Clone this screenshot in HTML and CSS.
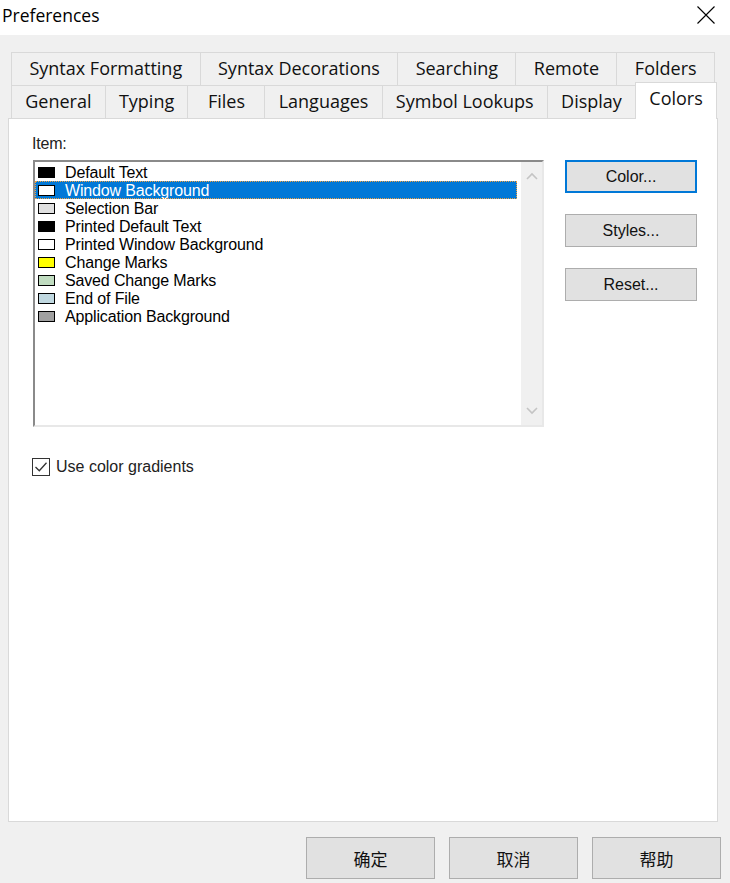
FILE: index.html
```html
<!DOCTYPE html>
<html lang="en">
<head>
    <meta charset="UTF-8">
    <title>Preferences</title>
    <link rel="stylesheet" href="styles.css">
</head>
<body>

<div class="titlebar">
    <span class="title">Preferences</span>
    <svg class="close" width="18" height="18" viewBox="0 0 18 18">
        <path d="M0.5 0.5 L17.5 17.5 M17.5 0.5 L0.5 17.5" stroke="#000" stroke-width="1.1" fill="none"/>
    </svg>
</div>

<div class="dialog">
    <div class="tabs">
        <div class="tab-row">
            <div class="tab">Syntax Formatting</div>
            <div class="tab">Syntax Decorations</div>
            <div class="tab">Searching</div>
            <div class="tab">Remote</div>
            <div class="tab">Folders</div>
        </div>
        <div class="tab-row">
            <div class="tab">General</div>
            <div class="tab">Typing</div>
            <div class="tab">Files</div>
            <div class="tab">Languages</div>
            <div class="tab">Symbol Lookups</div>
            <div class="tab">Display</div>
            <div class="tab active">Colors</div>
        </div>
    </div>

    <div class="panel">
        <div class="field-label">Item:</div>

        <div class="item-area">
            <div class="listbox">
                <ul class="items">
                    <li><span class="swatch black"></span>Default Text</li>
                    <li class="selected"><span class="swatch white"></span>Window Background</li>
                    <li><span class="swatch silver"></span>Selection Bar</li>
                    <li><span class="swatch black"></span>Printed Default Text</li>
                    <li><span class="swatch white"></span>Printed Window Background</li>
                    <li><span class="swatch yellow"></span>Change Marks</li>
                    <li><span class="swatch green"></span>Saved Change Marks</li>
                    <li><span class="swatch blue"></span>End of File</li>
                    <li><span class="swatch gray"></span>Application Background</li>
                </ul>
                <div class="scrollbar">
                    <svg width="12" height="8" viewBox="0 0 12 8"><path d="M1 7 L6 2 L11 7" stroke="#c4c4c4" stroke-width="1.6" fill="none"/></svg>
                    <svg width="12" height="8" viewBox="0 0 12 8"><path d="M1 1 L6 6 L11 1" stroke="#c4c4c4" stroke-width="1.6" fill="none"/></svg>
                </div>
            </div>

            <div class="side-buttons">
                <button class="btn default">Color...</button>
                <button class="btn">Styles...</button>
                <button class="btn">Reset...</button>
            </div>
        </div>

        <label class="check">
            <span class="checkbox">
                <svg width="16" height="16" viewBox="0 0 16 16"><path d="M2.5 8 L6.3 11.8 L13.5 3.8" stroke="#333" stroke-width="1.3" fill="none"/></svg>
            </span>
            Use color gradients
        </label>
    </div>

    <div class="footer">
        <button class="btn big">确定</button>
        <button class="btn big">取消</button>
        <button class="btn big">帮助</button>
    </div>
</div>

</body>
</html>
```

FILE: styles.css
```css
body {
    margin: 0;
    width: 730px;
    height: 883px;
    overflow: hidden;
    background-color: #f0f0f0;
    font-family: "Liberation Sans", Arial, sans-serif;
    font-size: 16px;
    color: #000;
}

.titlebar {
    height: 35px;
    background-color: #fff;
    display: flex;
    align-items: center;
    justify-content: space-between;
    padding: 0 15px 0 2px;
}

.title {
    font-family: "Open Sans", "Noto Sans", sans-serif;
    font-size: 17.5px;
    margin-top: -5px;
}

.close {
    margin-top: -6px;
}

.dialog {
    padding: 17px 12px 0 8px;
}

/* tabs */

.tabs {
    margin: 0 3px 0 3px;
    font-family: "Open Sans", "Noto Sans", sans-serif;
    font-size: 18px;
}

.tab-row {
    display: flex;
    align-items: flex-start;
    padding-left: 1px;
}

.tab {
    flex: 1 1 auto;
    min-width: 78px;
    box-sizing: border-box;
    height: 33px;
    line-height: 31px;
    padding: 0 10px;
    margin-left: -1px;
    text-align: center;
    white-space: nowrap;
    border: 1px solid #d9d9d9;
    border-bottom: none;
    background-color: #f0f0f0;
    color: #111;
}

.tab.active {
    position: relative;
    z-index: 1;
    height: 37px;
    line-height: 30px;
    margin: -3px -2px -1px -1px;
    background-color: #fff;
}

/* panel */

.panel {
    height: 702px;
    background-color: #fff;
    border: 1px solid #d9d9d9;
    padding: 0 0 0 23px;
    box-sizing: content-box;
}

.field-label {
    margin-top: 15px;
    height: 19px;
    line-height: 19px;
    letter-spacing: -0.2px;
    color: #222;
}

.item-area {
    display: flex;
    align-items: flex-start;
    margin-top: 7px;
}

.listbox {
    width: 507px;
    height: 263px;
    display: flex;
    border-top: 2px solid #8a8a8a;
    border-left: 2px solid #8a8a8a;
    border-right: 2px solid #e8e8e8;
    border-bottom: 2px solid #e8e8e8;
    margin-left: 1px;
}

.items {
    list-style: none;
    margin: 1px 4px 0 0;
    padding: 0;
    flex: 1;
}

.items li {
    height: 18px;
    line-height: 17px;
    display: flex;
    align-items: center;
    padding-left: 3px;
    white-space: nowrap;
    letter-spacing: -0.15px;
}

.items li.selected {
    background-color: #0078d7;
    color: #fff;
    outline: 1px dotted #f0a040;
    outline-offset: -1px;
}

.swatch {
    width: 15px;
    height: 9px;
    border: 1px solid #000;
    margin-right: 10px;
    flex: none;
}

.swatch.black { background-color: #000; }
.swatch.white { background-color: #fff; }
.swatch.silver { background-color: #e0e0e0; }
.swatch.yellow { background-color: #ffff00; }
.swatch.green { background-color: #c0dcc0; }
.swatch.blue { background-color: #c0d8e0; }
.swatch.gray { background-color: #a0a0a0; }

.scrollbar {
    width: 21px;
    background-color: #f0f0f0;
    display: flex;
    flex-direction: column;
    justify-content: space-between;
    align-items: center;
    padding: 10px 0 10px;
}

.side-buttons {
    display: flex;
    flex-direction: column;
    gap: 21px;
    margin-left: 21px;
}

.btn {
    width: 132px;
    height: 33px;
    background-color: #e1e1e1;
    border: 1px solid #adadad;
    font-family: "Liberation Sans", Arial, sans-serif;
    font-size: 16px;
    color: #111;
    padding: 0;
    margin: 0;
}

.btn.default {
    border: 2px solid #0078d7;
}

.check {
    display: flex;
    align-items: center;
    margin-top: 30px;
    height: 19px;
    color: #222;
}

.checkbox {
    width: 16px;
    height: 16px;
    border: 1px solid #333;
    margin-right: 6px;
    display: flex;
}

/* footer */

.footer {
    display: flex;
    justify-content: flex-end;
    gap: 14px;
    margin-top: 15px;
    margin-right: -3px;
}

.btn.big {
    width: 129px;
    height: 42px;
    font-family: "Noto Sans CJK SC", sans-serif;
    font-size: 17px;
}
```
